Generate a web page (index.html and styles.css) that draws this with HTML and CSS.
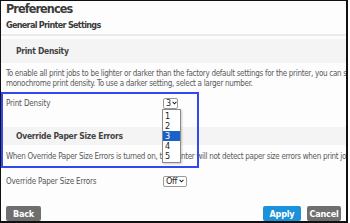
FILE: index.html
```html
<!DOCTYPE html>
<html lang="en">
<head>
<meta charset="utf-8">
<title>Preferences</title>
<link rel="stylesheet" href="styles.css">
</head>
<body>
<div class="frame">
  <header class="head">
    <h1 class="title">Preferences</h1>
    <h2 class="subtitle">General Printer Settings</h2>
  </header>
  <div class="sep"></div>
  <div class="band band-1">Print Density</div>
  <p class="desc desc-1">To enable all print jobs to be lighter or darker than the factory default settings for the printer, you can set the<br>monochrome print density. To use a darker setting, select a larger number.</p>
  <div class="row row-first">
    <span class="label">Print Density</span>
    <span class="select select-open"><span class="val">3</span><svg class="chev" viewBox="0 0 6 4" width="5" height="4"><path d="M0.7 0.7 L3 3 L5.3 0.7" fill="none" stroke="#222" stroke-width="1.3"/></svg></span>
  </div>
  <div class="band band-2">Override Paper Size Errors</div>
  <p class="desc desc-2">When Override Paper Size Errors is turned on, the printer will not detect paper size errors when print jobs are sent.</p>
  <div class="row row-second">
    <span class="label">Override Paper Size Errors</span>
    <span class="select select-off"><span class="val">Off</span><svg class="chev" viewBox="0 0 6 4" width="5" height="4"><path d="M0.7 0.7 L3 3 L5.3 0.7" fill="none" stroke="#222" stroke-width="1.3"/></svg></span>
  </div>
  <footer class="actions">
    <button class="btn btn-gray btn-back">Back</button>
    <div class="right">
      <button class="btn btn-blue btn-apply">Apply</button>
      <button class="btn btn-gray btn-cancel">Cancel</button>
    </div>
  </footer>
  <div class="highlight"></div>
  <ul class="menu">
    <li>1</li>
    <li>2</li>
    <li class="sel">3</li>
    <li>4</li>
    <li>5</li>
  </ul>
</div>
</body>
</html>
```
FILE: styles.css
```css
* { box-sizing: border-box; }
html, body { margin: 0; padding: 0; background: #ffffff; }
body {
  font-family: "Liberation Sans Narrow", "DejaVu Sans Condensed", "Liberation Sans", sans-serif;
  color: #555;
}
.frame {
  width: 348px;
  height: 223px;
  border: 2px solid #111;
  border-left-width: 1px;
  border-top-width: 1px;
  background: #fdfdfd;
  overflow: hidden;
  position: relative;
  display: flex;
  flex-direction: column;
}
.head { padding: 0 5px; }
.title {
  margin: 0;
  font-size: 12.5px;
  line-height: 15px;
  font-weight: bold;
  letter-spacing: -0.9px;
  color: #3a3a3a;
}
.subtitle {
  margin: 3px 0 0;
  font-size: 9px;
  line-height: 12px;
  font-weight: bold;
  letter-spacing: -0.7px;
  color: #3a3a3a;
}
.sep {
  margin-top: 3px;
  height: 2px;
  flex: none;
  background: #ebebeb;
}
.band {
  flex: none;
  padding-left: 15px;
  display: flex;
  align-items: center;
  background: #f4f4f4;
  font-size: 8.5px;
  font-weight: bold;
  letter-spacing: -0.3px;
  color: #444;
}
.band-1 { margin-top: 3px; height: 24px; }
.band-2 { margin-top: 17px; height: 18px; }
.desc {
  margin: 0;
  padding: 0 5px;
  font-size: 8px;
  line-height: 10px;
  letter-spacing: -0.3px;
  color: #5a5a5a;
  white-space: nowrap;
}
.desc-1 { margin-top: 6px; }
.desc-2 { margin-top: 7px; }
.row {
  flex: none;
  display: flex;
  align-items: center;
  padding-left: 5px;
  height: 14px;
}
.row-first { margin-top: 7px; }
.row-second { margin-top: 12px; }
.label {
  width: 157px;
  font-size: 8px;
  letter-spacing: -0.15px;
  color: #555;
}
.select {
  display: inline-flex;
  align-items: center;
  gap: 1px;
  height: 11px;
  padding: 0 0 0 2px;
  border: 1px solid #9a9a9a;
  border-radius: 2px;
  background: #fff;
  font-size: 9px;
  color: #222;
}
.select-open { width: 15px; }
.select-off { width: 24px; gap: 2px; letter-spacing: -0.3px; }
.chev { display: block; flex: none; }
.highlight {
  position: absolute;
  left: 0;
  top: 91px;
  width: 198px;
  height: 76px;
  border: 2px solid #3447f0;
  pointer-events: none;
}
.menu {
  position: absolute;
  left: 161px;
  top: 108px;
  width: 19px;
  height: 54px;
  margin: 0;
  padding: 1px 0;
  list-style: none;
  background: #fff;
  border: 1px solid #8a8a8a;
  box-shadow: 1px 1px 2px rgba(0,0,0,0.2);
}
.menu li {
  height: 10px;
  line-height: 10px;
  padding-left: 2px;
  font-size: 9px;
  color: #222;
}
.menu li.sel { background: #1a62c9; color: #fff; }
.actions {
  margin-top: auto;
  padding: 0 5px 0 5px;
  display: flex;
  justify-content: space-between;
  align-items: flex-end;
}
.right { display: flex; gap: 6px; }
.btn {
  height: 15px;
  padding: 0;
  border: 0;
  border-radius: 2px;
  font-family: inherit;
  font-size: 9px;
  font-weight: bold;
  letter-spacing: -0.2px;
  color: #fff;
  cursor: pointer;
}
.btn-back { width: 35px; }
.btn-apply { width: 38px; }
.btn-cancel { width: 34px; }
.btn-gray { background: #6f6f6f; }
.btn-blue { background: #1d92da; }
```
